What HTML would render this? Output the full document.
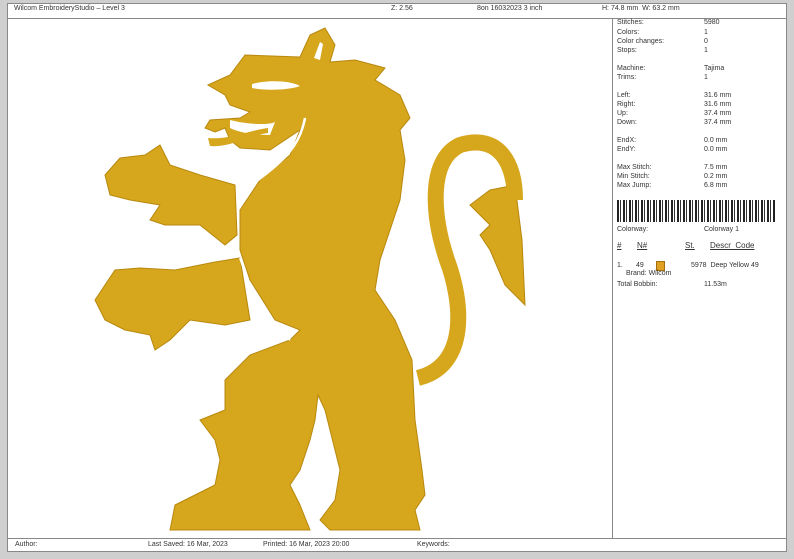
<!DOCTYPE html>
<html><head><style>
body{margin:0;width:794px;height:559px;background:#cfcfcf;position:relative;overflow:hidden;font-family:"Liberation Sans",sans-serif;font-size:7px;color:#333}
#box{position:absolute;left:7px;top:3px;width:778px;height:547px;background:#fff;border:1px solid #888}
.t{position:absolute;white-space:nowrap;line-height:8px}
.u{text-decoration:underline;font-size:8px}
</style></head><body>
<div id="box"></div>
<div style="position:absolute;left:8px;top:18px;width:778px;height:1px;background:#888"></div>
<div style="position:absolute;left:612px;top:18px;width:1px;height:520px;background:#888"></div>
<div style="position:absolute;left:8px;top:538px;width:778px;height:1px;background:#888"></div>
<div class="t" style="left:14px;top:5px">Wilcom EmbroideryStudio – Level 3</div>
<div class="t" style="left:391px;top:5px">Z: 2.56</div>
<div class="t" style="left:477px;top:5px">8on 16032023 3 inch</div>
<div class="t" style="left:602px;top:5px">H: 74.8 mm &nbsp;W: 63.2 mm</div>

<div class="t" style="left:617px;top:19px">Stitches:</div><div class="t" style="left:704px;top:19px">5980</div>
<div class="t" style="left:617px;top:29px">Colors:</div><div class="t" style="left:704px;top:29px">1</div>
<div class="t" style="left:617px;top:38px">Color changes:</div><div class="t" style="left:704px;top:38px">0</div>
<div class="t" style="left:617px;top:47px">Stops:</div><div class="t" style="left:704px;top:47px">1</div>
<div class="t" style="left:617px;top:65px">Machine:</div><div class="t" style="left:704px;top:65px">Tajima</div>
<div class="t" style="left:617px;top:74px">Trims:</div><div class="t" style="left:704px;top:74px">1</div>
<div class="t" style="left:617px;top:92px">Left:</div><div class="t" style="left:704px;top:92px">31.6 mm</div>
<div class="t" style="left:617px;top:101px">Right:</div><div class="t" style="left:704px;top:101px">31.6 mm</div>
<div class="t" style="left:617px;top:110px">Up:</div><div class="t" style="left:704px;top:110px">37.4 mm</div>
<div class="t" style="left:617px;top:119px">Down:</div><div class="t" style="left:704px;top:119px">37.4 mm</div>
<div class="t" style="left:617px;top:137px">EndX:</div><div class="t" style="left:704px;top:137px">0.0 mm</div>
<div class="t" style="left:617px;top:146px">EndY:</div><div class="t" style="left:704px;top:146px">0.0 mm</div>
<div class="t" style="left:617px;top:164px">Max Stitch:</div><div class="t" style="left:704px;top:164px">7.5 mm</div>
<div class="t" style="left:617px;top:173px">Min Stitch:</div><div class="t" style="left:704px;top:173px">0.2 mm</div>
<div class="t" style="left:617px;top:182px">Max Jump:</div><div class="t" style="left:704px;top:182px">6.8 mm</div>

<div style="position:absolute;left:617px;top:200px;width:158px;height:22px;background:repeating-linear-gradient(90deg,#222 0 2px,#fff 2px 3px,#333 3px 4px,#fff 4px 6px)"></div>
<div class="t" style="left:617px;top:226px">Colorway:</div><div class="t" style="left:704px;top:226px">Colorway 1</div>
<div class="t u" style="left:617px;top:242px">#</div>
<div class="t u" style="left:637px;top:242px">N#</div>
<div class="t u" style="left:685px;top:242px">St.</div>
<div class="t u" style="left:710px;top:242px">Descr&nbsp; Code</div>
<div class="t" style="left:617px;top:262px">1.</div><div class="t" style="left:636px;top:262px">49</div>
<div style="position:absolute;left:656px;top:261px;width:7px;height:8px;background:#e0a020;border:1px solid #a07010"></div>
<div class="t" style="left:691px;top:262px">5978 &nbsp;Deep Yellow 49</div>
<div class="t" style="left:626px;top:270px">Brand: Wilcom</div>
<div class="t" style="left:617px;top:281px">Total Bobbin:</div><div class="t" style="left:704px;top:281px">11.53m</div>

<div class="t" style="left:15px;top:541px">Author:</div>
<div class="t" style="left:148px;top:541px">Last Saved: 16 Mar, 2023</div>
<div class="t" style="left:263px;top:541px">Printed: 16 Mar, 2023 20:00</div>
<div class="t" style="left:417px;top:541px">Keywords:</div>

<svg style="position:absolute;left:0;top:0" width="794" height="559">
<g fill="#d6a61c" stroke="#b8880e" stroke-width="1">
<path d="M208,85 L230,75 L245,55 L300,57 L310,35 L325,28 L335,45 L330,62 L355,60 L385,68 L375,80 L400,95 L410,118 L400,130 L405,160 L400,200 L380,260 L375,290 L395,320 L412,360 L415,420 L422,470 L425,495 L415,510 L420,530 L330,530 L320,520 L335,500 L340,470 L330,430 L325,410 L318,395 L315,420 L310,440 L300,470 L290,485 L300,505 L310,530 L170,530 L175,505 L195,495 L215,485 L220,460 L215,440 L200,420 L225,410 L225,380 L250,355 L290,340 L300,330 L275,320 L250,280 L240,250 L240,210 L260,180 L290,155 L300,130 L270,150 L240,148 L230,140 L225,128 L215,132 L205,128 L210,120 L240,118 L250,112 L230,105 L225,95 Z"/>
<path d="M105,175 L120,158 L145,155 L160,145 L170,165 L200,175 L235,185 L237,235 L225,245 L200,225 L185,225 L165,225 L150,220 L160,205 L130,200 L110,195 Z"/>
<path d="M95,300 L115,270 L140,268 L175,270 L215,262 L240,258 L250,320 L225,325 L190,320 L170,340 L155,350 L150,335 L125,330 L105,320 Z"/>
<path d="M470,205 L490,190 L515,185 L522,240 L525,305 L505,285 L490,250 L480,235 L490,225 Z"/>
</g>
<path d="M418,378 C470,365 462,300 447,260 C432,215 428,160 460,145 C500,133 515,165 515,200" fill="none" stroke="#d6a61c" stroke-width="16"/>
<path d="M314,58 L320,42 L323,44 L320,60 Z" fill="#fff"/>
<path d="M252,84 C265,80 290,80 300,86 C290,90 265,91 252,88 Z" fill="#fff"/>
<path d="M230,120 C250,125 270,125 275,122 L270,135 C255,135 240,133 230,128 Z" fill="#fff"/>
<path d="M208,138 C230,140 250,130 268,128 L268,133 C250,135 230,148 210,146 Z" fill="#d6a61c"/>
<path d="M305,118 C300,145 285,160 258,180" fill="none" stroke="#fff" stroke-width="2.5"/>
<path d="M240,258 C250,290 265,320 290,340" fill="none" stroke="#fff" stroke-width="2"/>
</svg>
</body></html>
